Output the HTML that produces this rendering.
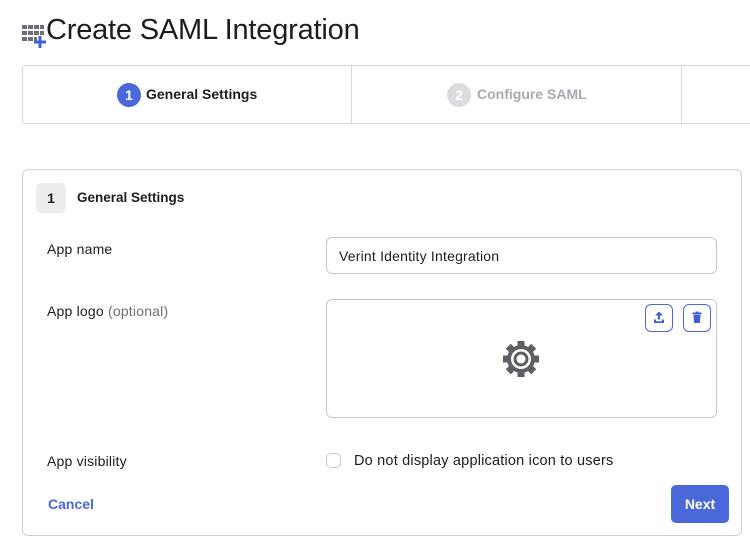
<!DOCTYPE html>
<html><head><style>
body{margin:0;width:750px;height:548px;background:#fff;font-family:"Liberation Sans",sans-serif;color:#1d1d21;position:relative;overflow:hidden}
.abs{position:absolute}
h1{position:absolute;left:46px;top:14px;margin:0;font-size:29px;font-weight:normal;letter-spacing:-0.2px;color:#1d1d21}
.stepper{left:22px;top:65px;width:760px;height:57px;border:1px solid #d7d7dc;border-radius:4px}
.div{top:0;width:1px;height:57px;background:#d7d7dc}
.num{width:24px;height:24px;border-radius:50%;color:#fff;font-size:14px;font-weight:bold;text-align:center;line-height:24px}
.card{left:22px;top:169px;width:718px;height:365px;border:1px solid #cfcfd4;border-radius:6px}
.lbl{font-size:14px;color:#1d1d21;letter-spacing:0.2px}
.inp{border:1px solid #c6c6cc;border-radius:6px}
.ib{width:28px;height:28px;border:1px solid #4a68d9;border-radius:6px;box-sizing:border-box}
</style></head><body>
<svg class="abs" style="left:22px;top:24px" width="25" height="24" viewBox="0 0 25 24">
<g fill="#6e6e78"><rect x="0" y="1" width="5" height="4"/><rect x="6" y="1" width="5" height="4"/><rect x="12" y="1" width="5" height="4"/><rect x="18" y="1" width="4" height="4"/>
<rect x="0" y="7" width="5" height="4"/><rect x="6" y="7" width="5" height="4"/><rect x="12" y="7" width="5" height="4"/><rect x="18" y="7" width="4" height="4"/>
<rect x="0" y="13" width="5" height="4"/><rect x="6" y="13" width="5" height="4"/><rect x="12" y="13" width="3" height="4"/></g>
<g fill="#3f5ed8"><rect x="16.5" y="12" width="3" height="12"/><rect x="12" y="16.5" width="12" height="3"/></g></svg>
<h1>Create SAML Integration</h1>
<div class="abs stepper">
 <div class="abs div" style="left:328px"></div>
 <div class="abs div" style="left:658px"></div>
 <div class="abs num" style="left:94px;top:17px;background:#4a68d9">1</div>
 <div class="abs" style="left:123px;top:20px;font-size:14px;font-weight:bold">General Settings</div>
 <div class="abs num" style="left:424px;top:17px;background:#dcdce0">2</div>
 <div class="abs" style="left:454px;top:20px;font-size:14px;font-weight:bold;color:#a8a8ae">Configure SAML</div>
</div>
<div class="abs card">
 <div class="abs" style="left:13px;top:13px;width:30px;height:30px;background:#ededee;border-radius:5px;font-size:14px;font-weight:bold;text-align:center;line-height:30px">1</div>
 <div class="abs" style="left:54px;top:20px;font-size:13.5px;font-weight:bold">General Settings</div>
</div>
<div class="abs lbl" style="left:47px;top:241px">App name</div>
<div class="abs inp" style="left:326px;top:237px;width:389px;height:35px"></div>
<div class="abs lbl" style="left:339px;top:248px">Verint Identity Integration</div>
<div class="abs lbl" style="left:47px;top:303px">App logo <span style="color:#6e6e78">(optional)</span></div>
<div class="abs inp" style="left:326px;top:299px;width:389px;height:117px"></div>
<div class="abs ib" style="left:645px;top:304px"><svg width="26" height="26" viewBox="0 0 26 26"><path d="M13 6.5l-4 4h3v4h2v-4h3z M8 14.5v3.5h10v-3.5h-2v1.7h-6v-1.7z" fill="#3f5ed8"/></svg></div>
<div class="abs ib" style="left:683px;top:304px"><svg width="26" height="26" viewBox="0 0 26 26"><rect x="8.5" y="7.5" width="9" height="2" fill="#3f5ed8"/><rect x="11.5" y="6.5" width="3" height="2" fill="#3f5ed8"/><path d="M9.5 10h7l-.6 8h-5.8z" fill="#3f5ed8"/></svg></div>
<svg class="abs" style="left:502px;top:340px" width="38" height="38" viewBox="0 0 38 38"><g transform="translate(19 19)" fill="#5e5e63">
<circle r="14"/>
<g><rect x="-3.5" y="-18" width="7" height="36"/><rect x="-3.5" y="-18" width="7" height="36" transform="rotate(45)"/><rect x="-3.5" y="-18" width="7" height="36" transform="rotate(90)"/><rect x="-3.5" y="-18" width="7" height="36" transform="rotate(135)"/></g>
<circle r="10" fill="#fff"/><circle r="7.5"/><circle r="4.5" fill="#fff"/></g></svg>
<div class="abs lbl" style="left:47px;top:453px">App visibility</div>
<div class="abs" style="left:326px;top:453px;width:13px;height:13px;border:1.5px solid #c6c6cc;border-radius:5px"></div>
<div class="abs lbl" style="left:354px;top:453px;font-size:14.5px;letter-spacing:0.2px">Do not display application icon to users</div>
<div class="abs" style="left:48px;top:496px;font-size:14px;font-weight:bold;color:#4a68d9">Cancel</div>
<div class="abs" style="left:671px;top:485px;width:58px;height:38px;background:#4a68d9;border-radius:5px;color:#fff;font-size:14px;font-weight:bold;text-align:center;line-height:38px">Next</div>
</body></html>
